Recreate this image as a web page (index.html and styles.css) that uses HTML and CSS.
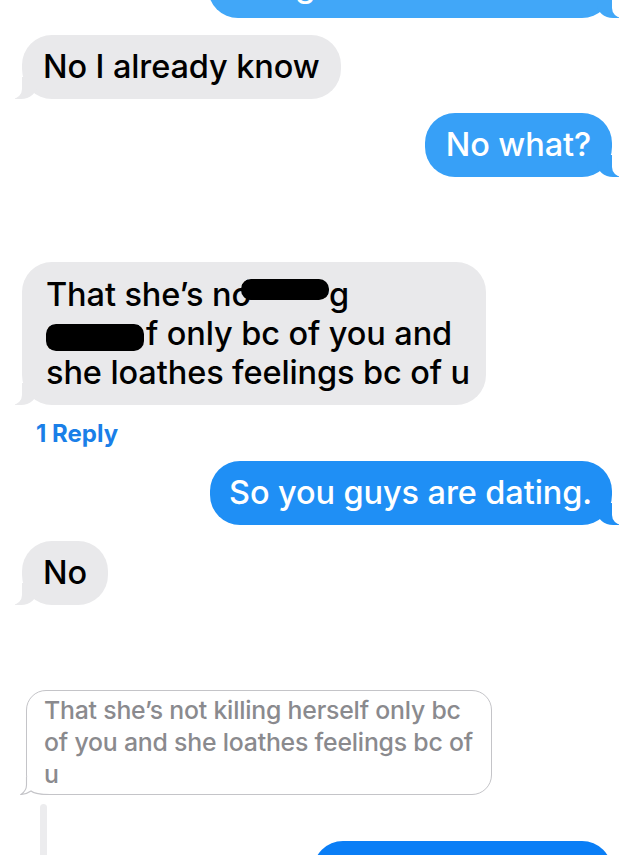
FILE: index.html
```html
<!DOCTYPE html>
<html lang="en">
<head>
<meta name="viewport" content="width=device-width, initial-scale=1">
<link rel="stylesheet" href="styles.css">
</head>
<body>
	<div id="thread">
		<div class="row me first">
			<div class="bubble blue b1">So I guess it <span class="ink">xx</span></div>
		</div>
		<div class="row them gap18">
			<div class="bubble gray">No I already know</div>
		</div>
		<div class="row me gap15">
			<div class="bubble blue b2">No what?</div>
		</div>
		<div class="row them gap86">
			<div class="bubble gray wide">That she’s no<span class="ink one">t killin</span>g<br><span class="ink two">hersel</span>f only bc of you and<br>she loathes feelings bc of u</div>
		</div>
		<div class="reply-count">1 Reply</div>
		<div class="row me">
			<div class="bubble blue b3">So you guys are dating.</div>
		</div>
		<div class="row them gap16">
			<div class="bubble gray">No</div>
		</div>
		<div class="row them gap86">
			<div class="quote">That she’s not killing herself only bc of you and she loathes feelings bc of u
				<svg class="quote-tail" width="30" height="18" viewBox="0 0 30 18"><path d="M6.5 0 L6.5 8 C6.5 12 4.5 15 1 17.5 C5 17.2 8 16.2 11 14 C14 16.5 19 17.5 30 17.5 L30 0 Z" fill="#fff"/><path d="M6.5 0 L6.5 8 C6.5 12 4.5 15 1 17.5 C5 17.2 8 16.2 11 14 C14 16.5 19 17.5 30 17.5" fill="none" stroke="#c4c4c8" stroke-width="1.1"/></svg>
			</div>
		</div>
		<div class="thread-end">
			<div class="thread-line"></div>
			<div class="bubble blue b4">Ok</div>
		</div>
	</div>
</body>
</html>
```

FILE: styles.css
```css
* {
	box-sizing: border-box;
}

html, body {
	margin: 0;
	background: #fff;
	overflow: hidden;
	height: 855px;
}

#thread {
	display: flex;
	flex-direction: column;
	font-family: Inter, "Liberation Sans", sans-serif;
}

.row {
	display: flex;
}
.row.me {
	justify-content: flex-end;
	padding-right: 28px;
}
.row.them {
	padding-left: 22px;
}

.first { margin-top: -46px; }
.gap18 { margin-top: 17px; }
.gap15 { margin-top: 14px; }
.gap86 { margin-top: 85px; }
.gap16 { margin-top: 16px; }

.bubble {
	position: relative;
	font-size: 32.5px;
	font-weight: 500;
	line-height: 40px;
	padding: 12px 21px;
	border-radius: 30px;
	letter-spacing: -0.1px;
	white-space: nowrap;
}

.bubble.gray {
	background: #e9e9eb;
	color: #000;
}
.bubble.gray::before {
	content: "";
	position: absolute;
	bottom: 0;
	left: -7px;
	width: 22px;
	height: 22px;
	background: #e9e9eb;
	border-bottom-right-radius: 16px 14px;
}
.bubble.gray::after {
	content: "";
	position: absolute;
	bottom: 0;
	left: -26px;
	width: 26px;
	height: 22px;
	background: #fff;
	border-bottom-right-radius: 10px;
}

.bubble.blue {
	color: #fff;
}
.bubble.blue::before {
	content: "";
	position: absolute;
	bottom: 0;
	right: -7px;
	width: 22px;
	height: 22px;
	background: inherit;
	border-bottom-left-radius: 16px 14px;
}
.bubble.blue::after {
	content: "";
	position: absolute;
	bottom: 0;
	right: -26px;
	width: 26px;
	height: 22px;
	background: #fff;
	border-bottom-left-radius: 10px;
}

.b1 { background: #41a7f8; width: 404px; }
.b2 { background: #37a0f7; }
.b3 { background: #1f8ff5; padding: 12px 20px 12px 19px; }
.b4 { background: #0a7ef6; width: 299px; }

.bubble.wide {
	line-height: 39px;
	padding: 13px 19px 13px 24px;
	width: 464px;
}

.ink {
	display: inline-block;
	background: #000;
	color: #000;
	border-radius: 10px;
	overflow: hidden;
	vertical-align: top;
}
.ink.one {
	height: 21px;
	line-height: 21px;
	margin-top: 4px;
	width: 88px;
	margin-left: -10px;
	margin-right: 0;
}
.ink.two {
	height: 27px;
	line-height: 27px;
	margin-top: 10px;
	width: 98px;
	margin-right: 2px;
}
.b1 .ink {
	width: 33px;
	height: 30px;
	border-radius: 4px;
	margin-left: 6px;
}

.reply-count {
	margin: 16px 0 14px 36px;
	font-size: 24px;
	line-height: 26px;
	font-weight: 700;
	color: #1a7fe8;
}

.quote {
	position: relative;
	z-index: 0;
	margin-left: 4px;
	width: 466px;
	border: 1px solid #c4c4c8;
	border-radius: 20px;
	padding: 3px 16px 4px 17px;
	font-size: 24.8px;
	font-weight: 500;
	line-height: 32px;
	letter-spacing: -0.2px;
	color: #8a8a8e;
	background: #fff;
}
.quote-tail {
	position: absolute;
	z-index: -1;
	left: -7px;
	bottom: -1px;
}

.thread-end {
	display: flex;
	justify-content: space-between;
	align-items: flex-start;
	margin-top: 9px;
	padding-right: 28px;
}
.thread-line {
	margin-left: 40px;
	width: 7px;
	height: 60px;
	background: #ececee;
	border-radius: 4px 4px 0 0;
}
.thread-end .bubble {
	margin-top: 37px;
}
```
